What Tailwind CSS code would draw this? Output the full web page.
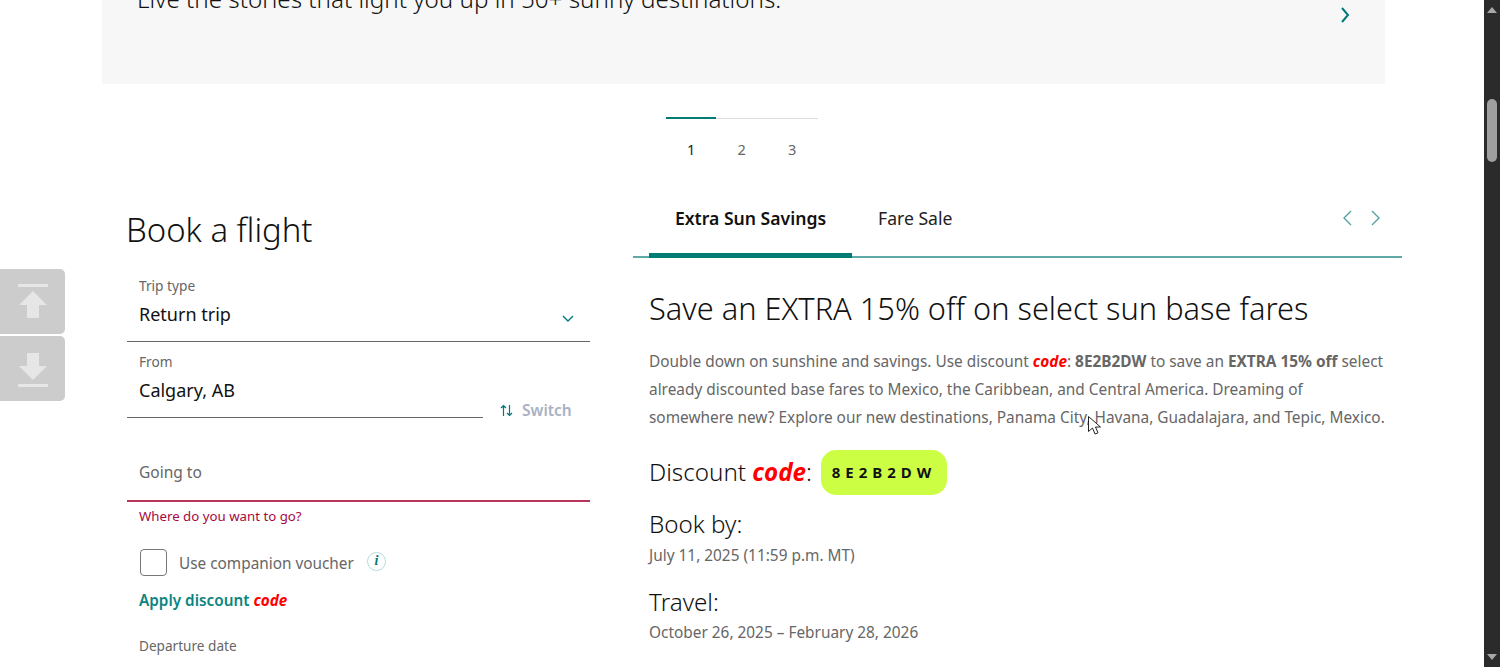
<!DOCTYPE html>
<html lang="en">
<head>
  <meta charset="UTF-8" />
  <meta name="viewport" content="width=device-width, initial-scale=1" />
  <title>Book a flight</title>
  <script src="https://cdn.jsdelivr.net/npm/@tailwindcss/browser@4"></script>
</head>
<body class="bg-white overflow-hidden font-['Noto_Sans',sans-serif] text-[#111]">
  <div class="relative flex h-[667px] w-[1500px] overflow-hidden">
    <main class="w-[1484px] shrink-0">
      <!-- hero card, scrolled off at the top -->
      <section class="mx-[102px] flex h-[84px] w-[1283px] items-start justify-between overflow-hidden bg-[#f7f7f7] pl-[35px] pr-[32px]">
        <p class="mt-[-13px] text-[24.2px] leading-[24px] font-light text-[#111]">Live the stories that light you up in 50+ sunny destinations.</p>
        <svg class="mt-[7px]" width="16" height="16" viewBox="0 0 16 16" fill="none" stroke="#00797b" stroke-width="2"><path d="M5 1l6 7-6 7"/></svg>
      </section>

      <!-- pager -->
      <nav class="mt-[33px] ml-[666px] w-[152px]">
        <div class="flex h-[2px] items-start">
          <span class="h-[2px] w-[50px] bg-[#007c74]"></span>
          <span class="mt-px h-px flex-1 bg-[#dcdcdc]"></span>
        </div>
        <div class="mt-[20px] flex text-[14.5px] leading-[20px] text-[#666]">
          <span class="w-[50.5px] text-center text-[#222]">1</span>
          <span class="w-[50.5px] text-center">2</span>
          <span class="w-[50.5px] text-center">3</span>
        </div>
      </nav>

      <div class="mt-[29px] ml-[127px] flex">
        <!-- booking form -->
        <section class="w-[463px] shrink-0">
          <h2 class="mt-[20px] -ml-px text-[32.9px] leading-[44px] font-light text-[#111]">Book a flight</h2>

          <div class="mt-[25px] h-[65px] border-b border-[#666] pl-[12px] pr-[15px]">
            <p class="text-[13.7px] leading-[18px] text-[#666]">Trip type</p>
            <div class="mt-[7px] flex items-center justify-between">
              <span class="text-[18px] leading-[24px]">Return trip</span>
              <svg class="mt-[10px]" width="14" height="10" viewBox="0 0 14 10" fill="none" stroke="#00797b" stroke-width="1.4"><path d="M2 2l5 5 5-5"/></svg>
            </div>
          </div>

          <div class="mt-[11px] flex items-end">
            <div class="h-[65px] w-[356px] border-b border-[#666] pl-[12px]">
              <p class="text-[13.7px] leading-[18px] text-[#666]">From</p>
              <p class="mt-[7px] text-[18px] leading-[24px]">Calgary, AB</p>
            </div>
            <div class="mb-[-2px] ml-[17px] flex items-center gap-[9px]">
              <svg width="13" height="13" viewBox="0 0 13 13" fill="none" stroke="#00797b" stroke-width="1.2"><path d="M3.5 12V1.5M1 4l2.5-2.5L6 4M9.5 1v10.5M7 9l2.5 2.5L12 9"/></svg>
              <span class="text-[15.5px] leading-[20px] font-semibold text-[#aab1c4]">Switch</span>
            </div>
          </div>

          <div class="mt-[43px] h-[41px] border-b-2 border-[#b8355c] pl-[12px]">
            <p class="text-[15.5px] leading-[22px] text-[#666]">Going to</p>
          </div>
          <p class="mt-[5px] pl-[12px] text-[13.25px] leading-[18px] text-[#a6093d]">Where do you want to go?</p>

          <div class="mt-[24px] flex items-center pl-[13px]">
            <span class="h-[27px] w-[27px] rounded-[4px] border border-[#777] bg-white"></span>
            <span class="ml-[12px] mt-[1px] text-[15.35px] leading-[22px] text-[#666]">Use companion voucher</span>
            <span class="ml-[13px] mb-[3px] flex h-[19px] w-[19px] items-center justify-center rounded-full border border-[#b5dcdc] font-['Liberation_Serif',serif] text-[14px] leading-none font-bold italic text-[#00797b]">i</span>
          </div>

          <p class="mt-[13px] pl-[12px] text-[15.3px] leading-[22px] font-semibold text-[#0b8580]">Apply discount <b class="font-bold italic text-[#f00]">code</b></p>

          <p class="mt-[26px] pl-[12px] text-[13.6px] leading-[18px] text-[#666]">Departure date</p>
        </section>

        <!-- offers -->
        <section class="ml-[43px] w-[769px] shrink-0">
          <div class="flex h-[70px] items-start border-b-2 border-[#5fa9a9] pr-[21px]">
            <div class="ml-[16px] h-[70px] w-[203px] border-b-[5px] border-[#007c74] pt-[18px] text-center text-[17.6px] leading-[24px] font-semibold text-[#111]">Extra Sun Savings</div>
            <div class="ml-[26px] pt-[18px] text-[17.6px] leading-[24px] text-[#222]">Fare Sale</div>
            <div class="ml-auto mt-[22px] flex gap-[15px]">
              <svg width="12" height="16" viewBox="0 0 12 16" fill="none" stroke="#4f9f9f" stroke-width="1.3"><path d="M9 1L2 8l7 7"/></svg>
              <svg width="12" height="16" viewBox="0 0 12 16" fill="none" stroke="#4f9f9f" stroke-width="1.3"><path d="M3 1l7 7-7 7"/></svg>
            </div>
          </div>

          <div class="pl-[16px]">
            <h3 class="mt-[28px] text-[30.75px] leading-[44px] font-light text-[#111]">Save an EXTRA 15% off on select sun base fares</h3>
            <p class="mt-[18px] w-[740px] text-[15.4px] leading-[28px] text-[#666]">Double down on sunshine and savings. Use discount <b class="font-bold italic text-[#f00]">code</b>: <b class="font-bold">8E2B2DW</b> to save an <b class="font-bold">EXTRA 15% off</b> select already discounted base fares to Mexico, the Caribbean, and Central America. Dreaming of somewhere new? Explore our new destinations, Panama City, Havana, Guadalajara, and Tepic, Mexico.</p>
            <div class="mt-[16px] flex items-center">
              <span class="text-[24.2px] leading-[32px] font-light text-[#111]">Discount <b class="font-bold italic text-[#f00]">code</b>:</span>
              <span class="ml-[9px] mt-[2px] flex h-[45px] w-[126px] items-center justify-center rounded-[15px] bg-[#ccff44] text-[15px] font-bold tracking-[5px] text-[#111]">8E2B2DW</span>
            </div>
            <p class="mt-[12px] text-[24.2px] leading-[34px] font-light text-[#111]">Book by:</p>
            <p class="mt-[2.5px] text-[15.4px] leading-[24px] text-[#666]">July 11, 2025 (11:59 p.m. MT)</p>
            <p class="mt-[17px] text-[24.2px] leading-[34px] font-light text-[#111]">Travel:</p>
            <p class="mt-[2.5px] text-[15.4px] leading-[24px] text-[#666]">October 26, 2025 – February 28, 2026</p>
          </div>
        </section>
      </div>
    </main>

    <!-- browser scrollbar -->
    <aside class="flex w-[16px] shrink-0 flex-col items-center justify-between bg-[#2b2b2b] py-[7px]">
      <div class="flex w-full flex-col items-center">
        <svg width="10" height="6" viewBox="0 0 10 6" fill="#a8a8a8"><path d="M5 0l5 6H0z"/></svg>
        <span class="mt-[86px] h-[63px] w-[10px] rounded-full bg-[#9f9f9f]"></span>
      </div>
      <svg width="10" height="6" viewBox="0 0 10 6" fill="#a8a8a8"><path d="M5 6L0 0h10z"/></svg>
    </aside>

    <!-- floating scroll buttons -->
    <div class="absolute left-0 top-[269px] flex flex-col gap-[2px]">
      <button class="flex h-[65px] w-[65px] flex-col items-center justify-center rounded-r-[5px] bg-[#cccccc]">
        <svg width="32" height="36" viewBox="0 0 32 36" fill="#e6e6e6"><path d="M1 0h30v3H1zM16 7l14 14h-8v13H10V21H2z"/></svg>
      </button>
      <button class="flex h-[65px] w-[65px] flex-col items-center justify-center rounded-r-[5px] bg-[#cccccc]">
        <svg width="32" height="36" viewBox="0 0 32 36" fill="#e6e6e6"><path d="M1 33h30v3H1zM16 29L2 15h8V2h12v13h8z"/></svg>
      </button>
    </div>

    <!-- mouse pointer from the capture -->
    <svg class="absolute left-[1087px] top-[415px]" width="15" height="22" viewBox="0 0 15 22" fill="#fff" stroke="#222" stroke-width="1"><path d="M1.5 1.5v15l4-3.5 2.5 6 3-1.2-2.5-5.8h5z"/></svg>
  </div>
</body>
</html>
